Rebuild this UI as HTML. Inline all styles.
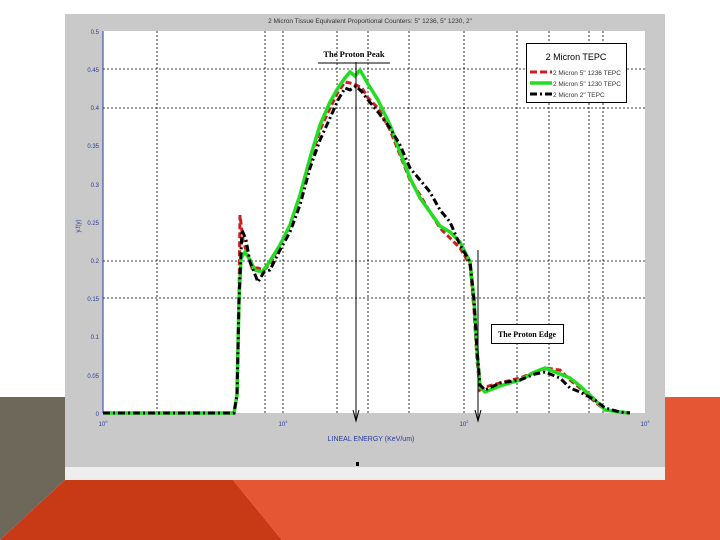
<!DOCTYPE html>
<html><head><meta charset="utf-8"><style>
html,body{margin:0;padding:0;width:720px;height:540px;overflow:hidden;background:#fff;font-family:"Liberation Sans",sans-serif}
svg{position:absolute;left:0;top:0}
</style></head><body>
<svg width="720" height="540" viewBox="0 0 720 540">
<polygon points="0,397 65,397 65,480 0,540" fill="#6e685a"/>
<polygon points="65,480 233,480 282,540 0,540" fill="#c83a16"/>
<polygon points="233,480 665,480 665,397 720,397 720,540 282,540" fill="#e55634"/>
<rect x="65" y="14" width="600" height="466" fill="#c9c9c9"/>
<rect x="65" y="467" width="600" height="13" fill="#eeeeee"/>
<rect x="103" y="31" width="542" height="382" fill="#fff"/>
<g stroke="#000" stroke-width="0.8" stroke-dasharray="2,2">
<line x1="157" y1="31" x2="157" y2="413"/><line x1="265" y1="31" x2="265" y2="413"/><line x1="283" y1="31" x2="283" y2="413"/>
<line x1="337" y1="31" x2="337" y2="413"/><line x1="368" y1="31" x2="368" y2="413"/><line x1="409" y1="31" x2="409" y2="413"/>
<line x1="464" y1="31" x2="464" y2="413"/><line x1="517" y1="31" x2="517" y2="413"/><line x1="549" y1="31" x2="549" y2="413"/>
<line x1="589" y1="31" x2="589" y2="413"/><line x1="603" y1="31" x2="603" y2="413"/>
<line x1="103" y1="69" x2="645" y2="69"/><line x1="103" y1="108" x2="645" y2="108"/>
<line x1="103" y1="261" x2="645" y2="261"/><line x1="103" y1="298" x2="645" y2="298"/>
</g>
<line x1="103" y1="31" x2="103" y2="413" stroke="#2a3a9a" stroke-width="1"/>
<g font-size="6" fill="#2a3a9a" text-anchor="end">
<text x="99" y="34">0.5</text><text x="99" y="72">0.45</text><text x="99" y="110">0.4</text><text x="99" y="148">0.35</text>
<text x="99" y="187">0.3</text><text x="99" y="225">0.25</text><text x="99" y="263">0.2</text><text x="99" y="301">0.15</text>
<text x="99" y="339">0.1</text><text x="99" y="378">0.05</text><text x="99" y="416">0</text>
</g>
<g font-size="6" fill="#2a3a9a" text-anchor="middle">
<text x="103" y="426">10<tspan dy="-3" font-size="4">0</tspan></text><text x="283" y="426">10<tspan dy="-3" font-size="4">1</tspan></text>
<text x="464" y="426">10<tspan dy="-3" font-size="4">2</tspan></text><text x="645" y="426">10<tspan dy="-3" font-size="4">3</tspan></text>
<text x="371" y="441" font-size="7">LINEAL ENERGY (KeV/um)</text>
<text x="370" y="23" font-size="6.5" fill="#333">2 Micron Tissue Equivalent Proportional Counters: 5" 1236, 5" 1230, 2"</text>
<text transform="translate(80,226) rotate(-90)" font-size="6">y.f(y)</text>
</g>
<rect x="356" y="462" width="3" height="4" fill="#000"/>
<polyline fill="none" stroke="#d01c1c" stroke-width="3" stroke-dasharray="6,3" points="103,413 234,413 237,395 239,300 240,215 243,240 246,250 252,268 258,268 264,270 270,264 280,245 290,225 300,195 310,162 320,130 330,108 338,92 345,82 350,83 356,85 362,88 368,98 378,108 390,130 400,155 410,180 420,195 430,212 440,228 450,238 460,248 470,265 474,310 477,360 480,390 485,387 500,383 520,378 535,372 545,368 560,370 570,380 580,388 595,402 605,410 620,412 630,413"/>
<polyline fill="none" stroke="#22dd22" stroke-width="3.5" points="103,413 234,413 237,395 239,300 241,258 245,252 250,260 255,270 262,272 268,264 280,245 290,225 300,195 310,158 320,125 330,102 338,88 345,78 350,72 355,76 360,70 368,84 378,100 390,125 400,152 410,178 420,198 430,212 440,226 450,232 460,242 470,262 474,300 477,350 480,387 485,392 500,386 520,380 535,372 545,368 555,372 570,378 580,386 595,400 605,410 620,412 630,413"/>
<polyline fill="none" stroke="#000" stroke-width="3" stroke-dasharray="7,3,2,3" points="103,413 234,413 237,395 239,300 242,230 246,240 250,262 258,282 264,272 270,270 280,250 290,232 300,205 310,168 320,140 330,118 338,100 345,88 350,90 356,86 362,92 368,100 378,112 390,128 400,145 410,168 420,180 430,192 440,210 450,222 460,245 470,262 474,300 477,350 480,385 485,390 500,383 520,380 535,374 545,372 560,378 570,388 580,392 595,400 605,408 620,412 630,413"/>
<line x1="356" y1="62" x2="356" y2="420" stroke="#000" stroke-width="1"/>
<path d="M353,410 L356,421 L359,410" fill="none" stroke="#000"/>
<line x1="478" y1="250" x2="478" y2="420" stroke="#000" stroke-width="1"/>
<path d="M475,410 L478,421 L481,410" fill="none" stroke="#000"/>
<line x1="318" y1="63" x2="390" y2="63" stroke="#000" stroke-width="1"/>
<text x="354" y="57" font-family="Liberation Serif,serif" font-size="8.5" font-weight="bold" text-anchor="middle">The Proton Peak</text>
<rect x="491.5" y="324.5" width="72" height="19" fill="#fff" stroke="#000"/>
<text x="527" y="337" font-family="Liberation Serif,serif" font-size="8" font-weight="bold" text-anchor="middle">The Proton Edge</text>
<rect x="526.5" y="43.5" width="100" height="59" fill="#fff" stroke="#000"/>
<text x="576" y="60" font-size="9" text-anchor="middle">2 Micron TEPC</text>
<line x1="530" y1="72" x2="552" y2="72" stroke="#d01c1c" stroke-width="3" stroke-dasharray="7,3"/>
<line x1="530" y1="83" x2="552" y2="83" stroke="#22dd22" stroke-width="3.5"/>
<line x1="530" y1="94" x2="552" y2="94" stroke="#000" stroke-width="3" stroke-dasharray="7,3,2,3"/>
<g font-size="6.5" fill="#333"><text x="553" y="75">2 Micron 5" 1236 TEPC</text><text x="553" y="86">2 Micron 5" 1230 TEPC</text><text x="553" y="97">2 Micron 2" TEPC</text></g>
</svg>
</body></html>
